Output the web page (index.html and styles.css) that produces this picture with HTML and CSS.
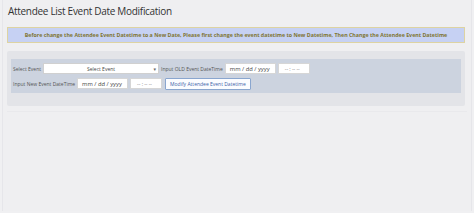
FILE: index.html
```html
<!DOCTYPE html>
<html lang="en">
<head>
    <meta charset="UTF-8">
    <meta name="viewport" content="width=device-width, initial-scale=1.0">
    <title>Attendee List Event Date Modification</title>
    <link rel="stylesheet" href="styles.css">
</head>
<body>

<div class="wrapper">
    <h2 class="page-title">Attendee List Event Date Modification</h2>

    <div class="alert-box">
        Before change the Attendee Event Datetime to a New Date, Please first change the event datetime to New Datetime, Then Change the Attendee Event Datetime
    </div>

    <div class="panel">
        <div class="panel-body">
            <div class="form-row">
                <label for="event">Select Event</label>
                <div class="select-box" id="event">
                    <span>Select Event</span>
                    <span class="arrow">&#9662;</span>
                </div>
                <label>Input OLD Event DateTime</label>
                <div class="input date-input">mm / dd / yyyy</div>
                <div class="input time-input">-- : -- --</div>
            </div>
            <div class="form-row">
                <label>Input New Event DateTime</label>
                <div class="input date-input">mm / dd / yyyy</div>
                <div class="input time-input">-- : -- --</div>
                <button class="btn">Modify Attendee Event Datetime</button>
            </div>
        </div>
    </div>

    <div class="content-area"></div>
</div>

</body>
</html>
```

FILE: styles.css
```css
body {
    margin: 0;
    background-color: #f0f0f2;
    font-family: "Open Sans", "DejaVu Sans", sans-serif;
    color: #333;
}
.wrapper {
    margin: 0 2px;
    height: 211px;
    border-left: 1px solid #e6e6ea;
    border-right: 1px solid #e6e6ea;
    background-color: #efeff1;
    padding: 0 4px;
}
.page-title {
    margin: 0;
    padding: 4px 0 0 1px;
    height: 22px;
    font-size: 10px;
    letter-spacing: -0.3px;
    font-weight: normal;
    color: #333;
    box-sizing: border-box;
}
.alert-box {
    margin: 5px 0 0 0;
    width: 458px;
    height: 16px;
    line-height: 14px;
    box-sizing: border-box;
    background-color: #c6d1f3;
    border: 1px solid #ddd3a2;
    color: #7f7532;
    font-size: 5.3px;
    font-weight: bold;
    text-align: center;
    white-space: nowrap;
}
.panel {
    margin-top: 8px;
    width: 458px;
    background-color: #e3e4e8;
    padding: 8px 4px 13px 4px;
    box-sizing: border-box;
    border-radius: 2px;
}
.panel-body {
    background-color: #ccd3df;
    padding: 3px 2px 4px 2px;
    height: 34px;
    box-sizing: border-box;
}
.form-row {
    display: flex;
    align-items: center;
    gap: 2px;
    height: 13px;
    margin-bottom: 2px;
}
.form-row label {
    font-size: 5px;
    color: #555;
    white-space: nowrap;
}
.select-box {
    width: 116px;
    height: 11px;
    background-color: #fff;
    border: 1px solid #d0d0d0;
    box-sizing: border-box;
    font-size: 5px;
    color: #444;
    display: flex;
    align-items: center;
    justify-content: center;
    position: relative;
}
.select-box .arrow {
    position: absolute;
    right: 2px;
    top: 2px;
    font-size: 5px;
    color: #666;
}
.input {
    height: 11px;
    background-color: #fff;
    border: 1px solid #d6d6d6;
    box-sizing: border-box;
    font-size: 5.8px;
    color: #444;
    display: flex;
    align-items: center;
}
.date-input {
    width: 51px;
    padding-left: 4px;
}
.time-input {
    width: 32px;
    padding-left: 6px;
    font-size: 5px;
    color: #777;
}
.btn {
    height: 12px;
    padding: 0 4px;
    margin-left: 1px;
    margin-top: 1px;
    background-color: #fbfcff;
    border: 1px solid #8aa6cf;
    border-radius: 1px;
    color: #3d62a8;
    font-family: inherit;
    font-size: 5px;
    cursor: pointer;
}
.content-area {
    margin-top: 5px;
    height: 100px;
    border-top: 1px solid #e9e9ec;
}
```
